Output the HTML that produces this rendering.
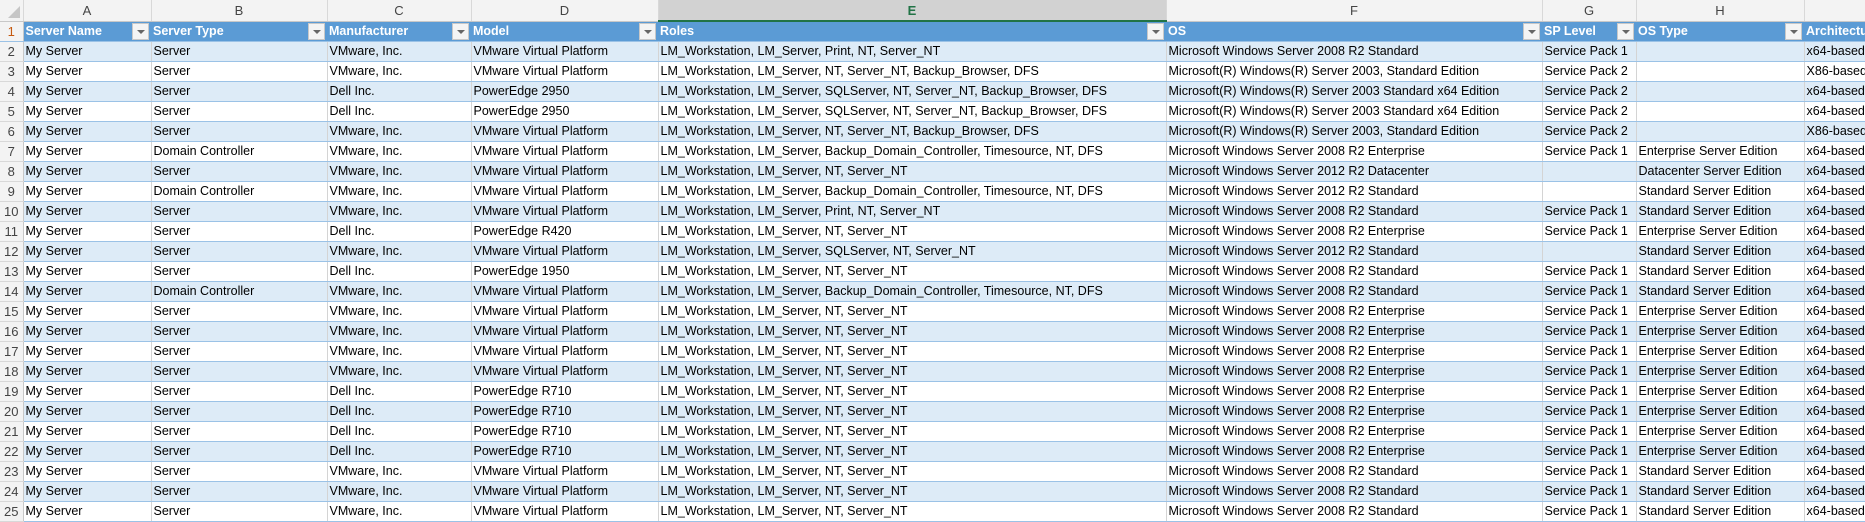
<!DOCTYPE html>
<html><head><meta charset="utf-8"><style>
body{margin:0;width:1865px;height:510px;overflow:hidden;background:#fff;font-family:"Liberation Sans",Arial,sans-serif;}
table{border-collapse:collapse;table-layout:fixed;position:absolute;left:0;top:0;width:1934px;}
td{height:19px;padding:0 0 0 2px;font-size:12.5px;white-space:nowrap;overflow:hidden;color:#000;border-right:1px solid #d4d4d4;border-bottom:1px solid #9bc2e6;line-height:19px;box-sizing:border-box}
tr.ch td{background:#f3f3f3;color:#444;text-align:center;height:21px;border-bottom:1px solid #c8c8c8;border-right:1px solid #d8d8d8;font-size:13px;padding:0}
tr.ch td.sel{background:#d2d2d2;color:#217346;font-weight:bold;border-bottom:2px solid #217346;}
td.rn{background:#f3f3f3;color:#444;text-align:center;padding:0;border-bottom:1px solid #d8d8d8;border-right:1px solid #c8c8c8;font-size:13px}
tr.hd td{background:#5b9bd5;color:#fff;font-weight:bold;position:relative;border-right:none;border-bottom:1px solid #9bc2e6}
tr.hd td.rn{background:#f3f3f3;color:#c55a11;font-weight:normal;border-right:1px solid #c8c8c8}
.dd{position:absolute;right:2px;top:1px;width:15px;height:15px;background:#f4f4f4;border:1px solid #c8c8c8;}
.dd:after{content:"";position:absolute;left:4px;top:6px;border-left:4px solid transparent;border-right:4px solid transparent;border-top:4px solid #666;}
tr.b td{background:#ddebf7}
tr.b td.rn{background:#f3f3f3}
.corner{position:absolute;left:8px;top:6px;width:0;height:0;border-left:12px solid transparent;border-bottom:12px solid #c6c6c6}
</style></head><body>
<table>
<colgroup><col style="width:23px"><col style="width:128px"><col style="width:176px"><col style="width:144px"><col style="width:187px"><col style="width:508px"><col style="width:376px"><col style="width:94px"><col style="width:168px"><col style="width:130px"></colgroup>
<tr class="ch"><td style="position:relative"><div class="corner"></div></td><td>A</td><td>B</td><td>C</td><td>D</td><td class="sel">E</td><td>F</td><td>G</td><td>H</td><td>I</td></tr>
<tr class="hd"><td class="rn">1</td><td>Server Name<div class="dd"></div></td><td>Server Type<div class="dd"></div></td><td>Manufacturer<div class="dd"></div></td><td>Model<div class="dd"></div></td><td>Roles<div class="dd"></div></td><td>OS<div class="dd"></div></td><td>SP Level<div class="dd"></div></td><td>OS Type<div class="dd"></div></td><td>Architecture</td></tr>
<tr class="b"><td class="rn">2</td><td>My Server</td><td>Server</td><td>VMware, Inc.</td><td>VMware Virtual Platform</td><td>LM_Workstation, LM_Server, Print, NT, Server_NT</td><td>Microsoft Windows Server 2008 R2 Standard</td><td>Service Pack 1</td><td></td><td>x64-based PC</td></tr>
<tr><td class="rn">3</td><td>My Server</td><td>Server</td><td>VMware, Inc.</td><td>VMware Virtual Platform</td><td>LM_Workstation, LM_Server, NT, Server_NT, Backup_Browser, DFS</td><td>Microsoft(R) Windows(R) Server 2003, Standard Edition</td><td>Service Pack 2</td><td></td><td>X86-based PC</td></tr>
<tr class="b"><td class="rn">4</td><td>My Server</td><td>Server</td><td>Dell Inc.</td><td>PowerEdge 2950</td><td>LM_Workstation, LM_Server, SQLServer, NT, Server_NT, Backup_Browser, DFS</td><td>Microsoft(R) Windows(R) Server 2003 Standard x64 Edition</td><td>Service Pack 2</td><td></td><td>x64-based PC</td></tr>
<tr><td class="rn">5</td><td>My Server</td><td>Server</td><td>Dell Inc.</td><td>PowerEdge 2950</td><td>LM_Workstation, LM_Server, SQLServer, NT, Server_NT, Backup_Browser, DFS</td><td>Microsoft(R) Windows(R) Server 2003 Standard x64 Edition</td><td>Service Pack 2</td><td></td><td>x64-based PC</td></tr>
<tr class="b"><td class="rn">6</td><td>My Server</td><td>Server</td><td>VMware, Inc.</td><td>VMware Virtual Platform</td><td>LM_Workstation, LM_Server, NT, Server_NT, Backup_Browser, DFS</td><td>Microsoft(R) Windows(R) Server 2003, Standard Edition</td><td>Service Pack 2</td><td></td><td>X86-based PC</td></tr>
<tr><td class="rn">7</td><td>My Server</td><td>Domain Controller</td><td>VMware, Inc.</td><td>VMware Virtual Platform</td><td>LM_Workstation, LM_Server, Backup_Domain_Controller, Timesource, NT, DFS</td><td>Microsoft Windows Server 2008 R2 Enterprise</td><td>Service Pack 1</td><td>Enterprise Server Edition</td><td>x64-based PC</td></tr>
<tr class="b"><td class="rn">8</td><td>My Server</td><td>Server</td><td>VMware, Inc.</td><td>VMware Virtual Platform</td><td>LM_Workstation, LM_Server, NT, Server_NT</td><td>Microsoft Windows Server 2012 R2 Datacenter</td><td></td><td>Datacenter Server Edition</td><td>x64-based PC</td></tr>
<tr><td class="rn">9</td><td>My Server</td><td>Domain Controller</td><td>VMware, Inc.</td><td>VMware Virtual Platform</td><td>LM_Workstation, LM_Server, Backup_Domain_Controller, Timesource, NT, DFS</td><td>Microsoft Windows Server 2012 R2 Standard</td><td></td><td>Standard Server Edition</td><td>x64-based PC</td></tr>
<tr class="b"><td class="rn">10</td><td>My Server</td><td>Server</td><td>VMware, Inc.</td><td>VMware Virtual Platform</td><td>LM_Workstation, LM_Server, Print, NT, Server_NT</td><td>Microsoft Windows Server 2008 R2 Standard</td><td>Service Pack 1</td><td>Standard Server Edition</td><td>x64-based PC</td></tr>
<tr><td class="rn">11</td><td>My Server</td><td>Server</td><td>Dell Inc.</td><td>PowerEdge R420</td><td>LM_Workstation, LM_Server, NT, Server_NT</td><td>Microsoft Windows Server 2008 R2 Enterprise</td><td>Service Pack 1</td><td>Enterprise Server Edition</td><td>x64-based PC</td></tr>
<tr class="b"><td class="rn">12</td><td>My Server</td><td>Server</td><td>VMware, Inc.</td><td>VMware Virtual Platform</td><td>LM_Workstation, LM_Server, SQLServer, NT, Server_NT</td><td>Microsoft Windows Server 2012 R2 Standard</td><td></td><td>Standard Server Edition</td><td>x64-based PC</td></tr>
<tr><td class="rn">13</td><td>My Server</td><td>Server</td><td>Dell Inc.</td><td>PowerEdge 1950</td><td>LM_Workstation, LM_Server, NT, Server_NT</td><td>Microsoft Windows Server 2008 R2 Standard</td><td>Service Pack 1</td><td>Standard Server Edition</td><td>x64-based PC</td></tr>
<tr class="b"><td class="rn">14</td><td>My Server</td><td>Domain Controller</td><td>VMware, Inc.</td><td>VMware Virtual Platform</td><td>LM_Workstation, LM_Server, Backup_Domain_Controller, Timesource, NT, DFS</td><td>Microsoft Windows Server 2008 R2 Standard</td><td>Service Pack 1</td><td>Standard Server Edition</td><td>x64-based PC</td></tr>
<tr><td class="rn">15</td><td>My Server</td><td>Server</td><td>VMware, Inc.</td><td>VMware Virtual Platform</td><td>LM_Workstation, LM_Server, NT, Server_NT</td><td>Microsoft Windows Server 2008 R2 Enterprise</td><td>Service Pack 1</td><td>Enterprise Server Edition</td><td>x64-based PC</td></tr>
<tr class="b"><td class="rn">16</td><td>My Server</td><td>Server</td><td>VMware, Inc.</td><td>VMware Virtual Platform</td><td>LM_Workstation, LM_Server, NT, Server_NT</td><td>Microsoft Windows Server 2008 R2 Enterprise</td><td>Service Pack 1</td><td>Enterprise Server Edition</td><td>x64-based PC</td></tr>
<tr><td class="rn">17</td><td>My Server</td><td>Server</td><td>VMware, Inc.</td><td>VMware Virtual Platform</td><td>LM_Workstation, LM_Server, NT, Server_NT</td><td>Microsoft Windows Server 2008 R2 Enterprise</td><td>Service Pack 1</td><td>Enterprise Server Edition</td><td>x64-based PC</td></tr>
<tr class="b"><td class="rn">18</td><td>My Server</td><td>Server</td><td>VMware, Inc.</td><td>VMware Virtual Platform</td><td>LM_Workstation, LM_Server, NT, Server_NT</td><td>Microsoft Windows Server 2008 R2 Enterprise</td><td>Service Pack 1</td><td>Enterprise Server Edition</td><td>x64-based PC</td></tr>
<tr><td class="rn">19</td><td>My Server</td><td>Server</td><td>Dell Inc.</td><td>PowerEdge R710</td><td>LM_Workstation, LM_Server, NT, Server_NT</td><td>Microsoft Windows Server 2008 R2 Enterprise</td><td>Service Pack 1</td><td>Enterprise Server Edition</td><td>x64-based PC</td></tr>
<tr class="b"><td class="rn">20</td><td>My Server</td><td>Server</td><td>Dell Inc.</td><td>PowerEdge R710</td><td>LM_Workstation, LM_Server, NT, Server_NT</td><td>Microsoft Windows Server 2008 R2 Enterprise</td><td>Service Pack 1</td><td>Enterprise Server Edition</td><td>x64-based PC</td></tr>
<tr><td class="rn">21</td><td>My Server</td><td>Server</td><td>Dell Inc.</td><td>PowerEdge R710</td><td>LM_Workstation, LM_Server, NT, Server_NT</td><td>Microsoft Windows Server 2008 R2 Enterprise</td><td>Service Pack 1</td><td>Enterprise Server Edition</td><td>x64-based PC</td></tr>
<tr class="b"><td class="rn">22</td><td>My Server</td><td>Server</td><td>Dell Inc.</td><td>PowerEdge R710</td><td>LM_Workstation, LM_Server, NT, Server_NT</td><td>Microsoft Windows Server 2008 R2 Enterprise</td><td>Service Pack 1</td><td>Enterprise Server Edition</td><td>x64-based PC</td></tr>
<tr><td class="rn">23</td><td>My Server</td><td>Server</td><td>VMware, Inc.</td><td>VMware Virtual Platform</td><td>LM_Workstation, LM_Server, NT, Server_NT</td><td>Microsoft Windows Server 2008 R2 Standard</td><td>Service Pack 1</td><td>Standard Server Edition</td><td>x64-based PC</td></tr>
<tr class="b"><td class="rn">24</td><td>My Server</td><td>Server</td><td>VMware, Inc.</td><td>VMware Virtual Platform</td><td>LM_Workstation, LM_Server, NT, Server_NT</td><td>Microsoft Windows Server 2008 R2 Standard</td><td>Service Pack 1</td><td>Standard Server Edition</td><td>x64-based PC</td></tr>
<tr><td class="rn">25</td><td>My Server</td><td>Server</td><td>VMware, Inc.</td><td>VMware Virtual Platform</td><td>LM_Workstation, LM_Server, NT, Server_NT</td><td>Microsoft Windows Server 2008 R2 Standard</td><td>Service Pack 1</td><td>Standard Server Edition</td><td>x64-based PC</td></tr>
</table>
</body></html>
